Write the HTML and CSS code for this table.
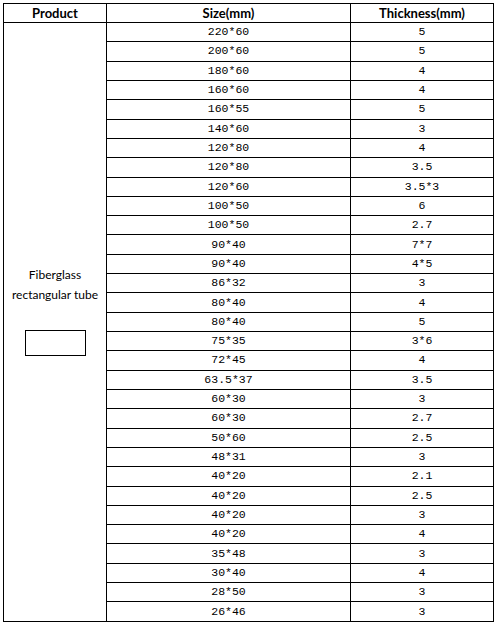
FILE: index.html
```html
<!DOCTYPE html>
<html>
<head>
<meta charset="utf-8">
<link rel="stylesheet" href="styles.css">
</head>
<body>
<div class="page">
<table class="spec">
<colgroup><col class="c1"><col class="c2"><col class="c3"></colgroup>
<thead>
<tr class="head"><th>Product</th><th>Size(mm)</th><th>Thickness(mm)</th></tr>
</thead>
<tbody>
<tr><td class="product" rowspan="31"><div class="pname">Fiberglass<br>rectangular tube</div><div class="pbox"></div></td><td>220*60</td><td>5</td></tr>
<tr><td>200*60</td><td>5</td></tr>
<tr><td>180*60</td><td>4</td></tr>
<tr><td>160*60</td><td>4</td></tr>
<tr><td>160*55</td><td>5</td></tr>
<tr><td>140*60</td><td>3</td></tr>
<tr><td>120*80</td><td>4</td></tr>
<tr><td>120*80</td><td>3.5</td></tr>
<tr><td>120*60</td><td>3.5*3</td></tr>
<tr><td>100*50</td><td>6</td></tr>
<tr><td>100*50</td><td>2.7</td></tr>
<tr><td>90*40</td><td>7*7</td></tr>
<tr><td>90*40</td><td>4*5</td></tr>
<tr><td>86*32</td><td>3</td></tr>
<tr><td>80*40</td><td>4</td></tr>
<tr><td>80*40</td><td>5</td></tr>
<tr><td>75*35</td><td>3*6</td></tr>
<tr><td>72*45</td><td>4</td></tr>
<tr><td>63.5*37</td><td>3.5</td></tr>
<tr><td>60*30</td><td>3</td></tr>
<tr><td>60*30</td><td>2.7</td></tr>
<tr><td>50*60</td><td>2.5</td></tr>
<tr><td>48*31</td><td>3</td></tr>
<tr><td>40*20</td><td>2.1</td></tr>
<tr><td>40*20</td><td>2.5</td></tr>
<tr><td>40*20</td><td>3</td></tr>
<tr><td>40*20</td><td>4</td></tr>
<tr><td>35*48</td><td>3</td></tr>
<tr><td>30*40</td><td>4</td></tr>
<tr><td>28*50</td><td>3</td></tr>
<tr><td>26*46</td><td>3</td></tr>
</tbody>
</table>
</div>
</body>
</html>
```
FILE: styles.css
```css
html, body {
  margin: 0;
  padding: 0;
  background: #ffffff;
}
.page {
  padding: 3px 0 0 3px;
}
.spec {
  border-collapse: collapse;
  table-layout: fixed;
  width: 490px;
  color: #000;
}
.c1 { width: 103px; }
.c2 { width: 244px; }
.c3 { width: 143px; }
.spec th, .spec td {
  border: 1px solid #000;
  padding: 0;
  text-align: center;
  vertical-align: middle;
}
.spec th {
  height: 18px;
  font-family: Lato, "Liberation Sans", sans-serif;
  font-weight: bold;
  font-size: 13px;
  line-height: 16px;
}
.spec td {
  height: 18.32px;
  font-family: "Liberation Mono", monospace;
  font-size: 11.5px;
  line-height: 16px;
}
.spec td.product {
  vertical-align: top;
  padding-top: 242px;
  font-family: Lato, "Liberation Sans", sans-serif;
  font-size: 12px;
}
.pname {
  line-height: 20px;
}
.pbox {
  width: 59px;
  height: 24px;
  border: 1px solid #000;
  margin: 25px auto 0;
}
```
